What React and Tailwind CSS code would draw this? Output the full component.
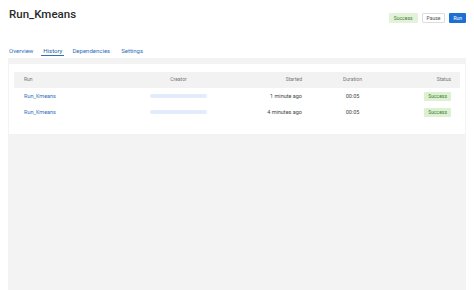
import React from "react";

const runs = [
  { name: "Run_Kmeans", started: "1 minute ago", duration: "00:05" },
  { name: "Run_Kmeans", started: "4 minutes ago", duration: "00:05" },
];

const cols = "grid grid-cols-[136px_57px_98px_95px_62px]";

const Badge = () => (
  <span className="inline-block bg-[#dcf0d2] text-[#3f7d33] text-[5px] leading-[9px] px-[4px] rounded-[1px]">
    Success
  </span>
);

export default function App() {
  return (
    <div className="w-[474px] h-[290px] bg-white overflow-hidden font-['Roboto',sans-serif] text-[#333]">
      <div className="flex justify-between items-start px-[9px] pt-[5px]">
        <h1 className="text-[11.5px] leading-[18px] font-medium text-[#2a2a2a]">Run_Kmeans</h1>
        <div className="flex items-center gap-[4px] mt-[8px] -mr-[1px]">
          <span className="bg-[#e3f2da] text-[#3f7d33] text-[5px] leading-[10px] px-[5px] rounded-[1px]">
            Success
          </span>
          <button className="border border-[#ddd] bg-white text-[#555] text-[5px] leading-[8px] px-[4px] rounded-[1px]">
            Pause
          </button>
          <button className="bg-[#1e6fd4] text-white text-[5px] leading-[10px] px-[4px] rounded-[1px]">
            Run
          </button>
        </div>
      </div>

      <div className="flex gap-[8px] px-[9px] mt-[23px] text-[6px] leading-[9px] text-[#2f6fbd]">
        <span>Overview</span>
        <span className="border-b-[1.5px] border-[#2f6fbd] px-[2px] text-[#2b5d9c]">History</span>
        <span>Dependencies</span>
        <span className="ml-[3px]">Settings</span>
      </div>

      <div className="mx-[8px] mt-[2px] h-[232px] bg-[#f3f3f3] pt-[6px]">
        <div className="mx-[1px] bg-white pt-[8px] pb-[14px] px-[5px]">
          <div className={`${cols} bg-[#f2f2f2] h-[16px] items-center text-[5px] text-[#777]`}>
            <span className="pl-[10px]">Run</span>
            <span className="text-center">Creator</span>
            <span className="text-right pr-[3px]">Started</span>
            <span className="text-center">Duration</span>
            <span className="text-right pr-[11px]">Status</span>
          </div>
          {runs.map((r, i) => (
            <div key={i} className={`${cols} h-[16px] items-center text-[5.5px] text-[#444]`}>
              <span className="pl-[10px] text-[#2f6fbd]">{r.name}</span>
              <span className="h-[4px] w-[57px] rounded-full bg-[#e2ecfa] blur-[0.6px]"></span>
              <span className="text-right pr-[3px]">{r.started}</span>
              <span className="text-center">{r.duration}</span>
              <span className="text-right pr-[11px]">
                <Badge />
              </span>
            </div>
          ))}
        </div>
      </div>
    </div>
  );
}
